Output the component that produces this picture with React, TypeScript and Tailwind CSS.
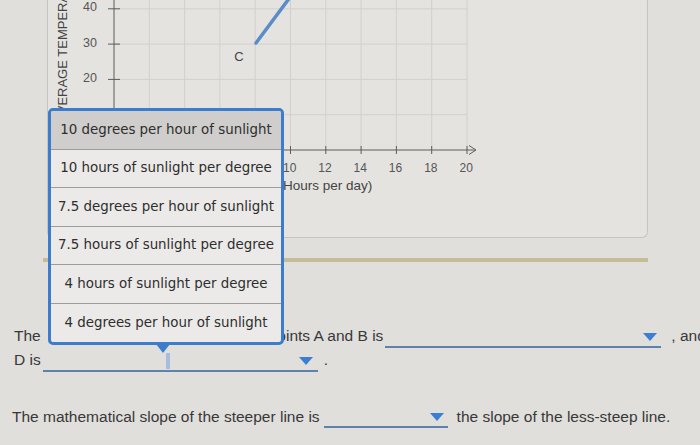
import React from "react";

const Tri = ({ className }: { className: string }) => (
  <svg className={className} width="14" height="8" viewBox="0 0 14 8">
    <polygon points="0,0 14,0 7,8" fill="#3b7fd4" />
  </svg>
);

const options = [
  "10 degrees per hour of sunlight",
  "10 hours of sunlight per degree",
  "7.5 degrees per hour of sunlight",
  "7.5 hours of sunlight per degree",
  "4 hours of sunlight per degree",
  "4 degrees per hour of sunlight",
];

export default function App() {
  const gx = Array.from({ length: 11 }, (_, k) => 66 + 35.3 * k);
  const gy = [1, 2, 3, 4].map((k) => 150 - 35.3 * k);
  return (
    <div className="relative w-[700px] h-[445px] overflow-hidden bg-[#e0dfdc] text-[#383838] font-['Liberation_Sans',Arial,sans-serif]">
      {/* chart card */}
      <div className="relative ml-[47px] w-[601px] h-[238px] border border-t-0 border-[#c6c4c1] rounded-b-[6px] bg-[#e4e3e0]">
        <svg className="absolute left-0 top-0 overflow-visible" width="599" height="237">
          {gx.slice(1).map((x, i) => (
            <line key={"v" + i} x1={x} y1={-5} x2={x} y2={150} stroke="#d2d0cd" strokeWidth="1" />
          ))}
          {gy.map((y, i) => (
            <line key={"h" + i} x1={66} y1={y} x2={419} y2={y} stroke="#d2d0cd" strokeWidth="1" />
          ))}
          <line x1={66} y1={-5} x2={66} y2={150} stroke="#5c5c5c" strokeWidth="1" />
          <line x1={66} y1={150} x2={427} y2={150} stroke="#5c5c5c" strokeWidth="1" />
          {gx.map((x, i) => (
            <line key={"tx" + i} x1={x} y1={146} x2={x} y2={154} stroke="#5c5c5c" strokeWidth="1" />
          ))}
          {gy.map((y, i) => (
            <line key={"ty" + i} x1={60} y1={y} x2={72} y2={y} stroke="#5c5c5c" strokeWidth="1" />
          ))}
          <polyline points="421,145.5 428,150 421,154.5" fill="none" stroke="#5c5c5c" strokeWidth="1" />
          <line x1={208} y1={43} x2={243.7} y2={-5} stroke="#5a8dc8" strokeWidth="3.5" strokeLinecap="round" />
        </svg>
        <div className="absolute left-[7px] top-[122px] origin-top-left -rotate-90 whitespace-nowrap text-[13px] leading-[15px] text-[#444]">
          AVERAGE TEMPERATURE
        </div>
        <div className="absolute left-[30px] top-[-10px] w-[24px] flex flex-col text-[12.5px] text-[#555]">
          {["40", "30", "20"].map((t) => (
            <div key={t} className="h-[35.3px] flex items-center justify-center">{t}</div>
          ))}
        </div>
        <div className="absolute left-[224px] top-[160px] flex text-[12px] leading-[16px] text-[#555]">
          {["10", "12", "14", "16", "18", "20"].map((t) => (
            <div key={t} className="w-[35.3px] text-center">{t}</div>
          ))}
        </div>
        <div className="absolute left-[184px] top-[49px] w-[14px] text-center text-[13px] leading-[16px] text-[#444]">C</div>
        <div className="absolute left-[235px] top-[178px] whitespace-nowrap text-[13.5px] leading-[16px] text-[#444]">Hours per day)</div>
      </div>

      {/* tan divider */}
      <div className="mt-[20px] ml-[43px] w-[605px] h-[4px] bg-[#c6bd98]" />

      {/* row 1 */}
      <div className="mt-[62px] h-[24px] flex items-center whitespace-nowrap text-[15.5px]">
        <span className="ml-[14px]">The</span>
        <span className="ml-[228px]">points A and B is</span>
        <span className="relative ml-[2px] w-[276px] h-[24px] shrink-0 border-b-2 border-[#5f82ad]">
          <Tri className="absolute right-[4px] bottom-[5px]" />
        </span>
        <span className="ml-[10px]">, and the slope</span>
      </div>

      {/* row 2 */}
      <div className="h-[24px] flex items-center whitespace-nowrap text-[15.5px]">
        <span className="ml-[14px]">D is</span>
        <span className="relative ml-[2px] w-[275px] h-[24px] shrink-0 border-b-2 border-[#5f82ad]">
          <Tri className="absolute right-[5px] bottom-[5px]" />
        </span>
        <span className="ml-[6px]">.</span>
      </div>

      {/* row 3 */}
      <div className="mt-[34px] h-[22px] flex items-center whitespace-nowrap text-[15.5px]">
        <span className="ml-[12px]">The mathematical slope of the steeper line is</span>
        <span className="relative ml-[4px] w-[124px] h-[22px] shrink-0 border-b-2 border-[#5f82ad]">
          <Tri className="absolute right-[4px] bottom-[5px]" />
        </span>
        <span className="ml-[9px]">the slope of the less-steep line.</span>
      </div>

      {/* open dropdown menu */}
      <div className="absolute left-[48px] top-[108px] w-[236px] h-[237px] border-[3px] border-[#3b7ccc] rounded-[5px] bg-[#ebeae8] overflow-hidden flex flex-col font-['DejaVu_Sans',Verdana,sans-serif] text-[13.4px] text-[#2e2e2e]">
        {options.map((o, i) => (
          <div
            key={o}
            className={
              i === 5
                ? "flex-1 flex items-center justify-center whitespace-nowrap"
                : i === 0
                ? "h-[38.5px] shrink-0 flex items-center justify-center whitespace-nowrap border-b border-[#9e9d9b] bg-[#cfcecc]"
                : "h-[38.5px] shrink-0 flex items-center justify-center whitespace-nowrap border-b border-[#9e9d9b]"
            }
          >
            {o}
          </div>
        ))}
      </div>
      <svg className="absolute left-[156px] top-[344px]" width="14" height="9" viewBox="0 0 14 9">
        <polygon points="0,0 14,0 7,9" fill="#3b7ccc" />
      </svg>
      <div className="absolute left-[166px] top-[353px] w-[4px] h-[16px] bg-[#a6bde0]" />
    </div>
  );
}
